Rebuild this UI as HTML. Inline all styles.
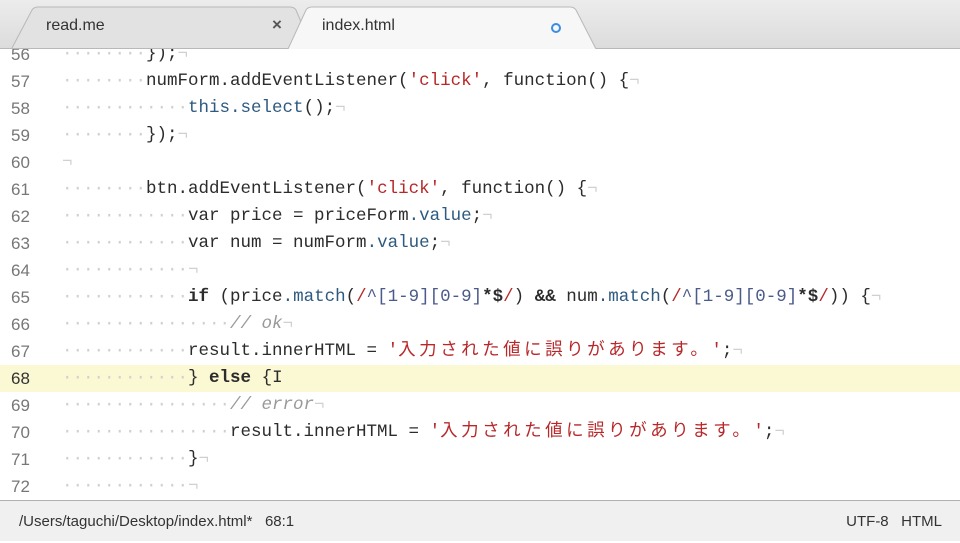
<!DOCTYPE html>
<html><head><meta charset="utf-8"><style>
body{margin:0;width:960px;height:540px;overflow:hidden;background:#fff;position:relative;font-family:"Liberation Sans",sans-serif}
.tabs{position:absolute;left:0;top:0;width:960px;height:48px;background:linear-gradient(#ececec,#dcdcdc);border-bottom:1px solid #b8b8b8}
.tab{position:absolute;top:8px;height:40px;font-size:16px;color:#333}
.code{position:absolute;left:0;top:0;width:960px;height:500px;overflow:hidden}
.ln{position:absolute;left:0;width:960px;height:27px;line-height:27px;font-family:"Liberation Mono","Noto Sans CJK JP",monospace;font-size:17.5px;color:#2c2c2c;white-space:pre}
.n{position:absolute;left:11px;color:#777;font-family:"Liberation Sans",sans-serif;font-size:17px}
.c{position:absolute;left:62px}
.d{color:#d0d0d0}
.s{color:#b8282a}
.b{color:#2d5a80}
.m{color:#4a5a8a}
.k{font-weight:bold}
.cm{color:#999;font-style:italic}
.j{letter-spacing:3.5px}
.hl{background:#fbf8d4}
.status{position:absolute;left:0;top:500px;width:960px;height:40px;background:#f0f0f0;border-top:1px solid #b0b0b0;font-size:15px;color:#333;line-height:42px}
</style></head><body>
<div class="code">
<div class="ln" style="top:41px"><span class="n">56</span><span class="c"><span class="d">········</span>});<span class="d">¬</span></span></div>
<div class="ln" style="top:68px"><span class="n">57</span><span class="c"><span class="d">········</span>numForm.addEventListener(<span class="s">'click'</span>, function() {<span class="d">¬</span></span></div>
<div class="ln" style="top:95px"><span class="n">58</span><span class="c"><span class="d">············</span><span class="b">this.select</span>();<span class="d">¬</span></span></div>
<div class="ln" style="top:122px"><span class="n">59</span><span class="c"><span class="d">········</span>});<span class="d">¬</span></span></div>
<div class="ln" style="top:149px"><span class="n">60</span><span class="c"><span class="d">¬</span></span></div>
<div class="ln" style="top:176px"><span class="n">61</span><span class="c"><span class="d">········</span>btn.addEventListener(<span class="s">'click'</span>, function() {<span class="d">¬</span></span></div>
<div class="ln" style="top:203px"><span class="n">62</span><span class="c"><span class="d">············</span>var price = priceForm<span class="b">.value</span>;<span class="d">¬</span></span></div>
<div class="ln" style="top:230px"><span class="n">63</span><span class="c"><span class="d">············</span>var num = numForm<span class="b">.value</span>;<span class="d">¬</span></span></div>
<div class="ln" style="top:257px"><span class="n">64</span><span class="c"><span class="d">············¬</span></span></div>
<div class="ln" style="top:284px"><span class="n">65</span><span class="c"><span class="d">············</span><span class="k">if</span> (price<span class="b">.match</span>(<span class="s">/</span><span class="m">^[1-9][0-9]</span><span class="k">*$</span><span class="s">/</span>) <span class="k">&amp;&amp;</span> num<span class="b">.match</span>(<span class="s">/</span><span class="m">^[1-9][0-9]</span><span class="k">*$</span><span class="s">/</span>)) {<span class="d">¬</span></span></div>
<div class="ln" style="top:311px"><span class="n">66</span><span class="c"><span class="d">················</span><span class="cm">// ok</span><span class="d">¬</span></span></div>
<div class="ln" style="top:338px"><span class="n">67</span><span class="c"><span class="d">············</span>result.innerHTML = <span class="s">'<span class="j">入力された値に誤りがあります。</span>'</span>;<span class="d">¬</span></span></div>
<div class="ln hl" style="top:365px"><span class="n" style="color:#333">68</span><span class="c"><span class="d">············</span>} <span class="k">else</span> {<span style="font-weight:300">I</span></span></div>
<div class="ln" style="top:392px"><span class="n">69</span><span class="c"><span class="d">················</span><span class="cm">// error</span><span class="d">¬</span></span></div>
<div class="ln" style="top:419px"><span class="n">70</span><span class="c"><span class="d">················</span>result.innerHTML = <span class="s">'<span class="j">入力された値に誤りがあります。</span>'</span>;<span class="d">¬</span></span></div>
<div class="ln" style="top:446px"><span class="n">71</span><span class="c"><span class="d">············</span>}<span class="d">¬</span></span></div>
<div class="ln" style="top:473px"><span class="n">72</span><span class="c"><span class="d">············¬</span></span></div>
</div>
<div class="tabs">
<svg width="960" height="49" style="position:absolute;left:0;top:0">
<path d="M12 48 L32 10 Q34 7 38 7 L290 7 Q294 7 296 10 L312 48" fill="#e2e2e2" stroke="#b8b8b8"/>
<path d="M288 49 L306 10 Q308 7 312 7 L570 7 Q574 7 576 10 L596 49" fill="#f7f7f7" stroke="#b8b8b8"/>
</svg>
<div class="tab" style="left:46px;top:17px">read.me</div>
<div class="tab" style="left:272px;top:15px;font-size:17px;font-weight:bold;color:#555">×</div>
<div class="tab" style="left:322px;top:17px">index.html</div>
<div style="position:absolute;left:551px;top:23px;width:6px;height:6px;border:2.5px solid #3c8ee0;border-radius:50%"></div>
</div>
<div class="status"><span style="position:absolute;left:19px">/Users/taguchi/Desktop/index.html*&nbsp;&nbsp;&nbsp;68:1</span><span style="position:absolute;right:18px">UTF-8&nbsp;&nbsp;&nbsp;HTML</span></div>
</body></html>
